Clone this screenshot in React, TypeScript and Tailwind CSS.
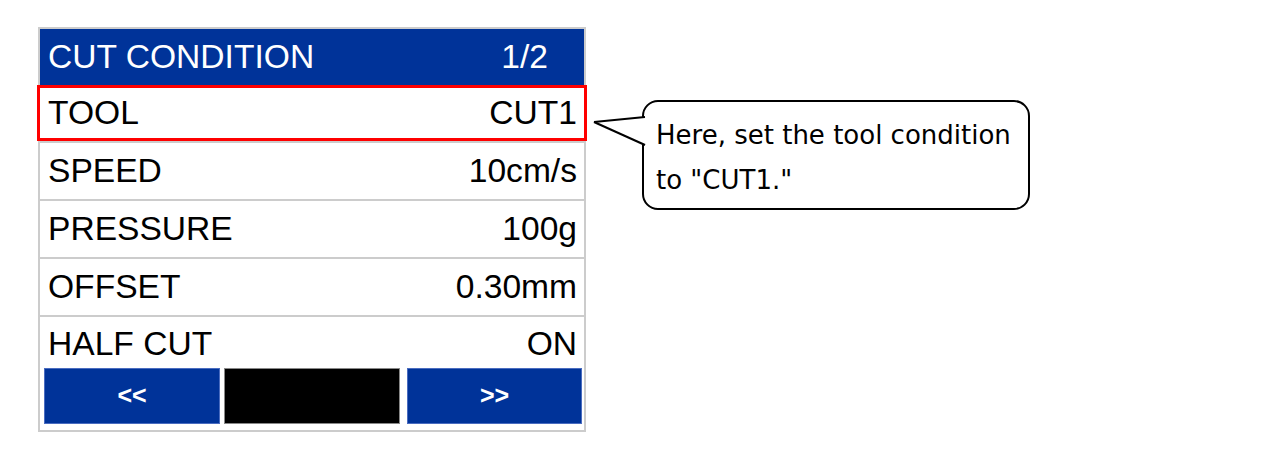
import React from "react";

const rows: { label: string; value: string }[] = [
  { label: "SPEED", value: "10cm/s" },
  { label: "PRESSURE", value: "100g" },
  { label: "OFFSET", value: "0.30mm" },
];

export default function App() {
  return (
    <div className="w-[1280px] h-[470px] bg-white flex items-start">
      <div className="ml-[38px] mt-[27px] w-[548px] border-2 border-[#cccccc] bg-white font-['Liberation_Sans',Arial,sans-serif] text-[33.6px] text-black">
        <div className="h-[56px] bg-[#003399] text-white flex items-center justify-between pl-[8px] pr-[36px]">
          <span>CUT CONDITION</span>
          <span>1/2</span>
        </div>
        <div className="relative h-[58px] border-b-2 border-[#cccccc] flex items-center justify-between pl-[8px] pr-[7px]">
          <span>TOOL</span>
          <span>CUT1</span>
          <div className="absolute left-[-3px] right-[-3px] top-0 bottom-[0px] border-[3px] border-[#ff0000]"></div>
        </div>
        {rows.map((r) => (
          <div key={r.label} className="h-[58px] border-b-2 border-[#cccccc] flex items-center justify-between pl-[8px] pr-[7px]">
            <span>{r.label}</span>
            <span>{r.value}</span>
          </div>
        ))}
        <div className="h-[51px] pt-[3px] flex items-center justify-between pl-[8px] pr-[7px]">
          <span>HALF CUT</span>
          <span>ON</span>
        </div>
        <div className="flex pl-[4px] pb-[6px] font-bold text-[25px] text-white">
          <div className="w-[176px] h-[56px] bg-[#003399] border border-[#4a6cc0] flex items-center justify-center">&lt;&lt;</div>
          <div className="w-[176px] h-[56px] ml-[4px] bg-black border border-[#888888]"></div>
          <div className="w-[175px] h-[56px] ml-[7px] bg-[#003399] border border-[#4a6cc0] flex items-center justify-center">&gt;&gt;</div>
        </div>
      </div>
      <div className="relative ml-[56px] mt-[100px] w-[388px] h-[110px] border-2 border-black rounded-[16px] bg-white pl-[12px] pt-[11px] font-['DejaVu_Sans',Verdana,sans-serif] text-[26px] leading-[45px] text-black">
        <svg className="absolute left-[-52px] top-[10px]" width="58" height="40" viewBox="0 0 58 40">
          <polygon points="2,10 54,5 54,33" fill="white" />
          <line x1="2" y1="10" x2="53" y2="5" stroke="black" strokeWidth="2" />
          <line x1="2" y1="10" x2="53" y2="33" stroke="black" strokeWidth="2" />
        </svg>
        <div className="relative">
          Here, set the tool condition
          <br />
          to "CUT1."
        </div>
      </div>
    </div>
  );
}
